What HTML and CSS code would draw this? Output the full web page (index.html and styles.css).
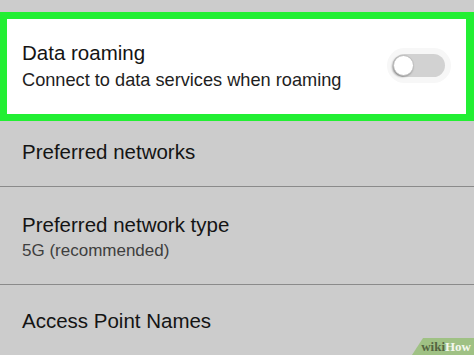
FILE: index.html
```html
<!DOCTYPE html>
<html>
<head>
<meta charset="utf-8">
<link rel="stylesheet" href="styles.css">
</head>
<body>
<div class="screen">
  <div class="highlight">
    <div class="roam">
      <div class="roam-text">
        <div class="title">Data roaming</div>
        <div class="sub-dark">Connect to data services when roaming</div>
      </div>
      <div class="toggle"><div class="knob"></div></div>
    </div>
  </div>
  <div class="row row-1">
    <div class="title">Preferred networks</div>
  </div>
  <div class="divider"></div>
  <div class="row row-2">
    <div class="title">Preferred network type</div>
    <div class="sub">5G (recommended)</div>
  </div>
  <div class="divider"></div>
  <div class="row row-3">
    <div class="title">Access Point Names</div>
  </div>
  <div class="wm"><span class="wm-wiki">wiki</span><span class="wm-how">How</span></div>
</div>
</body>
</html>
```
FILE: styles.css
```css
html, body {
  margin: 0;
  padding: 0;
}
body {
  background: #cccccc;
  font-family: "Liberation Sans", Arial, sans-serif;
  color: #161616;
}
.screen {
  position: relative;
  width: 474px;
  height: 355px;
  overflow: hidden;
  background: #cccccc;
  padding-top: 12px;
  box-sizing: border-box;
}
.highlight {
  border: 7px solid #22ef33;
  border-right-width: 8px;
  background: #ffffff;
  height: 109px;
  box-sizing: border-box;
}
.roam {
  display: flex;
  align-items: center;
  justify-content: space-between;
  height: 100%;
  padding: 0 21px 2px 15px;
  box-sizing: border-box;
}
.roam-text {
  display: flex;
  flex-direction: column;
}
.title {
  font-size: 20.5px;
  line-height: 24px;
  color: #141414;
}
.sub-dark {
  font-size: 18.2px;
  line-height: 22px;
  margin-top: 4px;
  color: #1e1e1e;
}
.toggle {
  width: 52px;
  height: 23px;
  border-radius: 12px;
  background: #d2d2d2;
  position: relative;
  box-shadow: 0 0 0 6px #f7f7f7;
}
.knob {
  position: absolute;
  left: 0;
  top: 1px;
  width: 19px;
  height: 19px;
  border-radius: 50%;
  background: #ffffff;
  border: 1px solid #bdbdbd;
  box-shadow: -1px 1px 2px rgba(0,0,0,0.35);
}
.row {
  padding-left: 22px;
}
.row-1 {
  padding-top: 19px;
  padding-bottom: 22px;
}
.row-2 {
  padding-top: 26px;
  padding-bottom: 23px;
}
.row-3 {
  padding-top: 24px;
}
.sub {
  font-size: 17px;
  line-height: 20px;
  margin-top: 4px;
  color: #3e3e3e;
}
.divider {
  height: 1px;
  background: #8a8a8a;
}
.wm {
  position: absolute;
  right: 0;
  bottom: 0;
  width: 62px;
  height: 17px;
  background: #9fc184;
  clip-path: polygon(11px 0, 100% 0, 100% 100%, 0 100%);
  font-family: "Liberation Serif", "Times New Roman", serif;
  font-weight: bold;
  font-size: 13px;
  line-height: 18px;
  text-align: right;
  padding-right: 3px;
  box-sizing: border-box;
}
.wm-wiki {
  color: #54643f;
}
.wm-how {
  color: #f4f8ee;
}
```
